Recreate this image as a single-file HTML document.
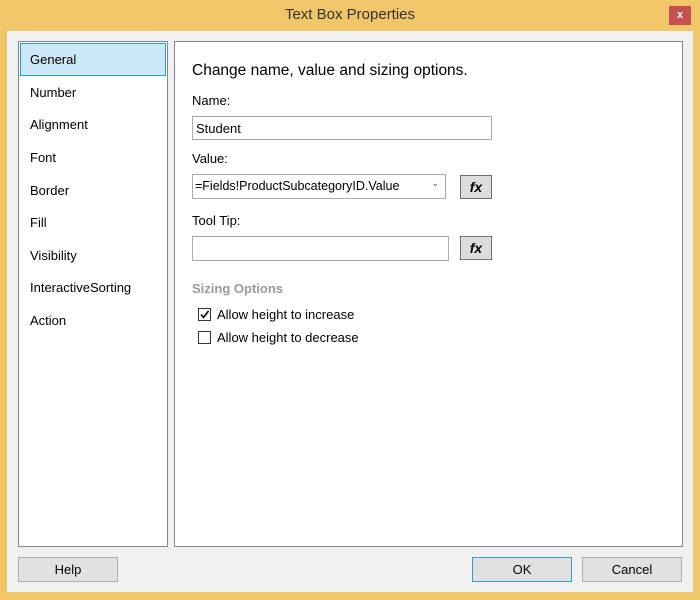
<!DOCTYPE html>
<html><head><style>
*{box-sizing:border-box;margin:0;padding:0}
body{width:700px;height:600px;background:#f0c669;font-family:"Liberation Sans",sans-serif;font-size:13px;color:#000;position:relative;overflow:hidden}
.a{position:absolute}
.title{left:0;top:6px;width:700px;text-align:center;font-size:15px;color:#333}
.close{left:669px;top:6px;width:22px;height:19px;background:#c75050;color:#fff;font-size:11px;font-weight:bold;text-align:center;line-height:18px}
.client{left:7px;top:31px;width:686px;height:561px;background:#f0f0f0}
.list{left:18px;top:41px;width:150px;height:506px;background:#fff;border:1px solid #828790}
.sel{left:20px;top:43px;width:146px;height:33px;background:#cce8f6;border:1px solid #26a0da}
.item{left:30px;font-size:13px}
.panel{left:174px;top:41px;width:509px;height:506px;background:#fff;border:1px solid #828790}
.tb{background:#fff;border:1px solid #acacac}
.fx{width:32px;height:24px;background:#ddd;border:1px solid #707070;text-align:center;font:italic bold 14px "Liberation Sans",sans-serif;line-height:22px}
.btn{height:25px;background:#e1e1e1;border:1px solid #adadad;text-align:center;line-height:23px;font-size:13px}
.cb{width:13px;height:13px;border:1px solid #333;background:#fff}
</style></head><body>
<div class="a title">Text Box Properties</div>
<div class="a close">x</div>
<div class="a client"></div>
<div class="a list"></div>
<div class="a sel"></div>
<div class="a item" style="top:52px">General</div>
<div class="a item" style="top:85px">Number</div>
<div class="a item" style="top:117px">Alignment</div>
<div class="a item" style="top:150px">Font</div>
<div class="a item" style="top:183px">Border</div>
<div class="a item" style="top:215px">Fill</div>
<div class="a item" style="top:248px">Visibility</div>
<div class="a item" style="top:280px">InteractiveSorting</div>
<div class="a item" style="top:313px">Action</div>
<div class="a panel"></div>
<div class="a" style="left:192px;top:62px;font-size:15.5px">Change name, value and sizing options.</div>
<div class="a" style="left:192px;top:93px">Name:</div>
<div class="a tb" style="left:192px;top:116px;width:300px;height:24px;padding:4px 3px">Student</div>
<div class="a" style="left:192px;top:151px">Value:</div>
<div class="a tb" style="left:192px;top:174px;width:254px;height:25px;padding:4px 2px;font-size:12.5px">=Fields!ProductSubcategoryID.Value<span style="position:absolute;right:6px;top:3px;font-size:9px;color:#555">&#8964;</span></div>
<div class="a fx" style="left:460px;top:175px">fx</div>
<div class="a" style="left:192px;top:213px">Tool Tip:</div>
<div class="a tb" style="left:192px;top:236px;width:257px;height:25px"></div>
<div class="a fx" style="left:460px;top:236px">fx</div>
<div class="a" style="left:192px;top:281px;color:#999;font-weight:bold">Sizing Options</div>
<div class="a cb" style="left:198px;top:308px"><svg width="11" height="11" style="position:absolute;left:0;top:0"><path d="M2 5.5 L4.5 8.5 L9.5 2" stroke="#000" stroke-width="1.6" fill="none"/></svg></div>
<div class="a" style="left:217px;top:307px">Allow height to increase</div>
<div class="a cb" style="left:198px;top:331px"></div>
<div class="a" style="left:217px;top:330px">Allow height to decrease</div>
<div class="a btn" style="left:18px;top:557px;width:100px">Help</div>
<div class="a btn" style="left:472px;top:557px;width:100px;border-color:#3c96e6">OK</div>
<div class="a btn" style="left:582px;top:557px;width:100px">Cancel</div>
</body></html>
